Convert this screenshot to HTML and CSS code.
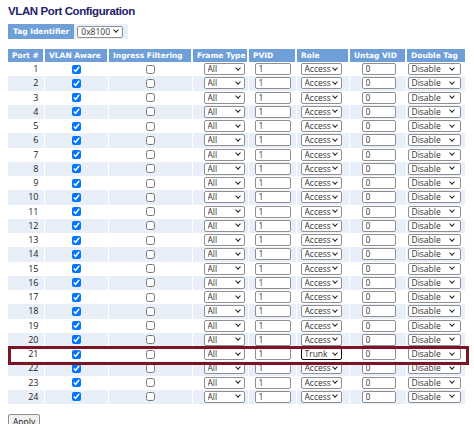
FILE: index.html
```html
<!DOCTYPE html>
<html lang="en">
<head>
    <meta charset="UTF-8">
    <title>VLAN Port Configuration</title>
    <link rel="stylesheet" href="styles.css">
</head>
<body>
    <h1 class="title">VLAN Port Configuration</h1>

    <table class="tag-table">
        <tr>
            <th>Tag Identifier</th>
            <td>
                <span class="dd dd-tag">
                    <select>
                        <option>0x8100</option>
                        <option>0x88A8</option>
                        <option>0x9100</option>
                    </select>
                </span>
            </td>
        </tr>
    </table>

    <table class="config">
        <colgroup>
            <col style="width:36px"><col style="width:64px"><col style="width:84px"><col style="width:56px">
            <col style="width:48px"><col style="width:53px"><col style="width:57px"><col style="width:59px">
        </colgroup>
        <thead>
            <tr>
                <th>Port #</th>
                <th>VLAN Aware</th>
                <th>Ingress Filtering</th>
                <th>Frame Type</th>
                <th>PVID</th>
                <th>Role</th>
                <th>Untag VID</th>
                <th>Double Tag</th>
            </tr>
        </thead>
        <tbody id="rows"></tbody>
    </table>

    <div class="highlight"></div>

    <button class="apply" type="button">Apply</button>

    <script>
        // build the 24 port rows
        const body = document.getElementById('rows');
        for (let i = 1; i <= 24; i++) {
            const trunk = i === 21;
            const tr = document.createElement('tr');
            tr.innerHTML =
                '<td class="port">' + i + '</td>' +
                '<td class="mid"><input type="checkbox" checked></td>' +
                '<td class="mid"><input type="checkbox"></td>' +
                '<td class="frame"><span class="dd dd-frame"><select><option>All</option><option>Tagged</option><option>Untagged</option></select></span></td>' +
                '<td class="pvid"><input type="text" class="txt" value="1"></td>' +
                '<td class="role"><span class="dd dd-role' + (trunk ? ' focused' : '') + '"><select>' +
                    '<option' + (trunk ? '' : ' selected') + '>Access</option>' +
                    '<option' + (trunk ? ' selected' : '') + '>Trunk</option>' +
                    '<option>Hybrid</option></select></span></td>' +
                '<td class="untag"><input type="text" class="txt txt-untag" value="0"></td>' +
                '<td class="dtag"><span class="dd dd-dtag"><select><option>Disable</option><option>Enable</option></select></span></td>';
            body.appendChild(tr);
        }
    </script>
</body>
</html>
```

FILE: styles.css
```css
* {
    margin: 0;
    padding: 0;
    box-sizing: border-box;
}
body {
    position: relative;
    padding: 0 8px;
    background: #fff;
    font-family: "Open Sans", sans-serif;
    color: #222;
}
.title {
    font-family: "Liberation Sans", Arial, sans-serif;
    font-size: 11.5px;
    letter-spacing: -0.4px;
    font-weight: bold;
    color: #1d226b;
    padding-top: 5px;
    height: 24px;
}

/* tag identifier */
.tag-table {
    border-collapse: collapse;
}
.tag-table th {
    background: #6f9fd8;
    color: #fff;
    font-family: "DejaVu Sans", Verdana, sans-serif;
    font-size: 7.5px;
    font-weight: bold;
    padding: 0 5px;
    height: 15px;
    white-space: nowrap;
}
.tag-table td {
    background: #e9eff9;
    padding: 0 5px 0 3px;
}

/* main table */
.config {
    margin-top: 10px;
    border-collapse: collapse;
    table-layout: fixed;
    width: 457px;
}
.config th {
    background: #6f9fd8;
    color: #fff;
    font-family: "DejaVu Sans", Verdana, sans-serif;
    font-size: 7.5px;
    font-weight: bold;
    text-align: left;
    padding: 0 0 0 4px;
    height: 13px;
    white-space: nowrap;
    border-right: 2px solid #fff;
}
.config th:last-child {
    border-right: none;
}
.config td {
    height: 14.25px;
    padding: 0;
    font-size: 9px;
    line-height: 10px;
    border-right: 1px solid #fff;
    vertical-align: middle;
}
.config tbody tr:nth-child(even) td {
    background: #e9eff9;
}
.config td:last-child {
    border-right: none;
}
.config .port {
    text-align: right;
    padding-right: 5px;
}
.config .mid {
    text-align: center;
}
.config .frame {
    padding-left: 11px;
}
.config .pvid {
    padding-left: 6px;
}
.config .role {
    padding-left: 4px;
}
.config .untag {
    padding-left: 12px;
}
.config .dtag {
    padding-left: 1px;
}

input[type="checkbox"] {
    width: 9px;
    height: 9px;
    display: block;
    margin: 0 auto;
    accent-color: #0075ff;
}

/* dropdowns: plain box with a chevron on top */
.dd {
    position: relative;
    display: block;
    height: 12px;
}
.dd select {
    appearance: none;
    -webkit-appearance: none;
    display: block;
    width: 100%;
    height: 12px;
    font-family: "Open Sans", sans-serif;
    font-size: 8.5px;
    line-height: 10px;
    padding: 0 0 0 3px;
    border: 1px solid #8f8f8f;
    border-radius: 2px;
    background: #fff;
    color: #333;
    outline: none;
}
.dd::after {
    content: "";
    position: absolute;
    right: 5px;
    top: 2.5px;
    width: 3px;
    height: 3px;
    border-right: 1.5px solid #222;
    border-bottom: 1.5px solid #222;
    transform: rotate(45deg);
    pointer-events: none;
}
.dd-tag {
    width: 46px;
}
.dd-frame {
    width: 41px;
}
.dd-role {
    width: 41px;
}
.dd-role.focused select {
    border: 1.5px solid #111;
    border-radius: 2px;
}
.dd-dtag {
    width: 53px;
}
.dd-dtag::after {
    right: 7px;
}

.txt {
    display: block;
    width: 36px;
    height: 12px;
    font-family: "Open Sans", sans-serif;
    font-size: 8.5px;
    line-height: 9px;
    padding: 0 3px 1px;
    border: 1px solid #8f8f8f;
    border-radius: 2px;
    color: #333;
}
.txt-untag {
    width: 34px;
}

/* selected row marker */
.highlight {
    position: absolute;
    left: 8px;
    top: 346px;
    width: 461px;
    height: 19px;
    border: 3px solid #7b1424;
    pointer-events: none;
}

.apply {
    margin-top: 10px;
    font-family: "Open Sans", sans-serif;
    font-size: 8.5px;
    line-height: 11px;
    padding: 1px 4px;
    border: 1px solid #8f8f8f;
    border-radius: 2px;
    background: #efefef;
    color: #222;
}
```
